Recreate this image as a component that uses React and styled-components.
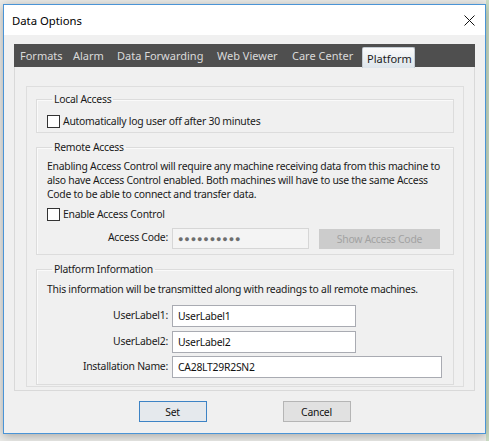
import React from "react";
import styled, { createGlobalStyle } from "styled-components";

const GlobalStyle = createGlobalStyle`
  html, body {
    margin: 0;
    padding: 0;
  }
  body {
    background: linear-gradient(to right, #ecece9 0, #ecece9 486px, #cddfc6 486px);
    font-family: "Segoe UI", "Noto Sans", sans-serif;
    font-size: 10.4px;
    letter-spacing: -0.25px;
    color: #000;
  }
`;

const Screen = styled.div`
  width: 489px;
  height: 441px;
  padding: 4px 0 0 3px;
  box-sizing: border-box;
`;

const Window = styled.div`
  width: 483px;
  height: 430px;
  box-sizing: border-box;
  border: 1px solid #4a94d6;
  background: #f0f0f0;
  box-shadow: 0 2px 10px rgba(0, 0, 0, 0.3);
  display: flex;
  flex-direction: column;
`;

const TitleBar = styled.div`
  height: 30px;
  background: #fff;
  display: flex;
  align-items: center;
  justify-content: space-between;
  padding: 0 10px 0 8px;
  font-size: 11.3px;
  letter-spacing: 0;
`;

const CloseIcon = styled.svg`
  width: 11px;
  height: 11px;
  margin-top: 1px;
`;

const Body = styled.div`
  flex: 1;
  display: flex;
  flex-direction: column;
  padding: 9px 10px 0 10px;
`;

const TabStrip = styled.div`
  height: 23px;
  background: #4f4f4f;
  display: flex;
  align-items: flex-end;
  padding-left: 2px;
`;

const Tab = styled.div`
  width: ${p => p.w}px;
  height: ${p => (p.active ? 21 : 23)}px;
  box-sizing: border-box;
  display: flex;
  align-items: center;
  padding: 0 0 ${p => (p.active ? 0 : 1)}px 4px;
  margin-bottom: ${p => (p.active ? -1 : 0)}px;
  font-size: 11px;
  letter-spacing: 0;
  color: ${p => (p.active ? "#1a1a1a" : "#dadada")};
  background: ${p => (p.active ? "linear-gradient(#fafafa, #dde5eb)" : "transparent")};
  border: ${p => (p.active ? "1px solid #c4ccd3" : "none")};
  border-bottom: none;
  border-radius: 2px 2px 0 0;
  white-space: nowrap;
`;

const TabPanel = styled.div`
  height: 324px;
  box-sizing: border-box;
  border: 1px solid #d9d9d9;
  border-top: none;
  padding: 19px 10px 3px 11px;
`;

const Frame = styled.div`
  height: 100%;
  box-sizing: border-box;
  border: 1px solid #dedede;
  padding: 4px 9px 0 9px;
  display: flex;
  flex-direction: column;
  gap: ${p => p.gap}px;
`;

const Group = styled.fieldset`
  margin: 0;
  border: 1px solid #dcdcdc;
  box-shadow: inset 1px 1px 0 #fafafa;
  padding: ${p => p.pad};
  min-width: 0;
  display: flex;
  flex-direction: column;
`;

const Legend = styled.legend`
  margin-left: 5px;
  padding: 0 2px;
  line-height: 16px;
  color: #1a1a1a;
`;

const Text = styled.div`
  line-height: 14px;
  margin-top: ${p => p.top || 0}px;
  color: #1a1a1a;
  white-space: nowrap;
`;

const CheckRow = styled.label`
  height: 16px;
  display: flex;
  align-items: center;
  gap: 3px;
  margin-top: ${p => p.top || 0}px;
  color: #1a1a1a;
`;

const Box = styled.span`
  width: 13px;
  height: 13px;
  box-sizing: border-box;
  border: 1px solid #333;
  background: #fff;
`;

const FieldRow = styled.div`
  display: flex;
  align-items: center;
  margin-top: ${p => p.top || 0}px;
`;

const FieldLabel = styled.div`
  width: 121px;
  text-align: right;
  padding-right: 4px;
  margin-top: -3px;
  color: #1a1a1a;
`;

const Input = styled.div`
  width: ${p => p.w}px;
  height: ${p => p.h || 22}px;
  box-sizing: border-box;
  border: 1px solid ${p => (p.disabled ? "#d6d6d6" : "#a9abb2")};
  background: ${p => (p.disabled ? "#f4f4f4" : "#fff")};
  display: flex;
  align-items: center;
  padding-left: 5px;
  color: ${p => (p.disabled ? "#6e6e6e" : "#111")};
`;

const Dots = styled.span`
  font-size: 9px;
  letter-spacing: 0.9px;
`;

const GreyButton = styled.div`
  width: 121px;
  height: 20px;
  margin-left: 10px;
  background: #cccccc;
  color: #a2a2a2;
  display: flex;
  align-items: center;
  justify-content: center;
`;

const Footer = styled.div`
  display: flex;
  justify-content: center;
  gap: 76px;
  padding-top: 10px;
`;

const Button = styled.div`
  width: 68px;
  height: 21px;
  box-sizing: border-box;
  border: 1px solid ${p => (p.primary ? "#3d83c5" : "#b5b5b5")};
  background: ${p => (p.primary ? "#e5e9ed" : "#e1e1e1")};
  display: flex;
  align-items: center;
  justify-content: center;
  color: #111;
`;

const tabs = [
  { name: "Formats", w: 53 },
  { name: "Alarm", w: 44 },
  { name: "Data Forwarding", w: 100 },
  { name: "Web Viewer", w: 75 },
  { name: "Care Center", w: 74 },
  { name: "Platform", w: 53, active: true },
];

const Field = ({ label, value, w, top }) => (
  <FieldRow top={top}>
    <FieldLabel>{label}</FieldLabel>
    <Input w={w}>{value}</Input>
  </FieldRow>
);

export default function App() {
  return (
    <Screen>
      <GlobalStyle />
      <Window>
        <TitleBar>
          <span>Data Options</span>
          <CloseIcon viewBox="0 0 11 11">
            <path d="M0.5 0.5 L10.5 10.5 M10.5 0.5 L0.5 10.5" stroke="#111" strokeWidth="1" />
          </CloseIcon>
        </TitleBar>
        <Body>
          <TabStrip>
            {tabs.map(t => (
              <Tab key={t.name} w={t.w} active={t.active}>{t.name}</Tab>
            ))}
          </TabStrip>
          <TabPanel>
            <Frame gap={6}>
              <Group pad="0 10px 3px 10px">
                <Legend>Local Access</Legend>
                <CheckRow top={6}>
                  <Box />
                  Automatically log user off after 30 minutes
                </CheckRow>
              </Group>
              <Group pad="0 10px 5px 10px">
                <Legend>Remote Access</Legend>
                <Text top={4}>
                  Enabling Access Control will require any machine receiving data from this machine to
                  <br />
                  also have Access Control enabled. Both machines will have to use the same Access
                  <br />
                  Code to be able to connect and transfer data.
                </Text>
                <CheckRow top={5}>
                  <Box />
                  Enable Access Control
                </CheckRow>
                <FieldRow top={6}>
                  <FieldLabel>Access Code:</FieldLabel>
                  <Input w={137} h={21} disabled>
                    <Dots>●●●●●●●●●●</Dots>
                  </Input>
                  <GreyButton>Show Access Code</GreyButton>
                </FieldRow>
              </Group>
              <Group pad="0 10px 6px 10px">
                <Legend>Platform Information</Legend>
                <Text top={5}>This information will be transmitted along with readings to all remote machines.</Text>
                <Field label="UserLabel1:" value="UserLabel1" w={184} top={9} />
                <Field label="UserLabel2:" value="UserLabel2" w={184} top={4} />
                <Field label="Installation Name:" value="CA28LT29R2SN2" w={270} top={3} />
              </Group>
            </Frame>
          </TabPanel>
          <Footer>
            <Button primary>Set</Button>
            <Button>Cancel</Button>
          </Footer>
        </Body>
      </Window>
    </Screen>
  );
}
